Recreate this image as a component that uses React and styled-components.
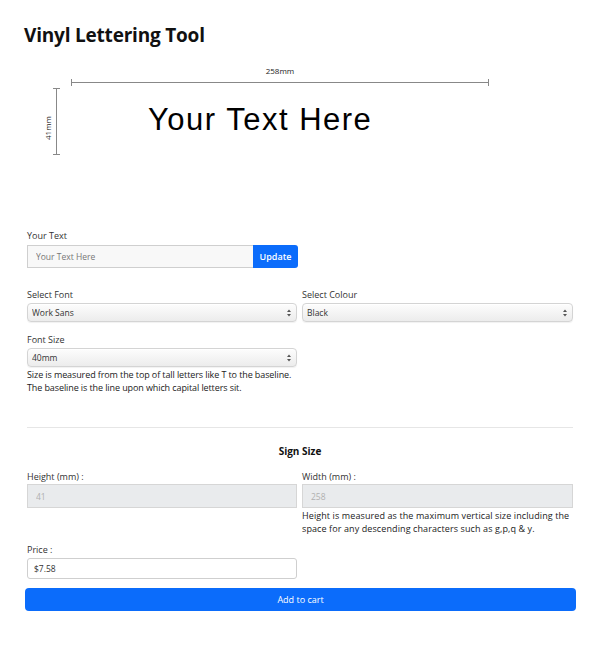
import styled, { createGlobalStyle } from "styled-components";

const GlobalStyle = createGlobalStyle`
  body {
    margin: 0;
    background: #fff;
    font-family: "Open Sans", "Liberation Sans", sans-serif;
    color: #222;
  }
`;

const Page = styled.div`
  width: 600px;
  padding: 0 27px;
  box-sizing: border-box;
`;

const Title = styled.h1`
  margin: 22px 0 0 -3px;
  font-size: 19px;
  font-weight: 700;
  line-height: 26px;
  color: #111;
  letter-spacing: -0.2px;
`;

const Preview = styled.div`
  display: flex;
  height: 164px;
  margin-top: 18px;
  padding-left: 15px;
`;

const VDim = styled.div`
  display: flex;
  align-items: center;
  gap: 3px;
  height: 67px;
  margin-top: 22px;
  width: 29px;
`;

const VLabel = styled.span`
  writing-mode: vertical-rl;
  transform: rotate(180deg);
  font-size: 8px;
  color: #222;
  margin-top: 12px;
`;

const VLine = styled.div`
  position: relative;
  width: 1px;
  height: 100%;
  background: #888;
  &::before,
  &::after {
    content: "";
    position: absolute;
    left: -3px;
    width: 7px;
    height: 1px;
    background: #888;
  }
  &::before { top: 0; }
  &::after { bottom: 0; }
`;

const Canvas = styled.div`
  width: 418px;
  display: flex;
  flex-direction: column;
`;

const HLabel = styled.div`
  text-align: center;
  font-size: 8px;
  line-height: 10px;
  color: #222;
  margin-bottom: 6px;
`;

const HLine = styled.div`
  position: relative;
  height: 1px;
  background: #888;
  &::before,
  &::after {
    content: "";
    position: absolute;
    top: -3px;
    width: 1px;
    height: 7px;
    background: #888;
  }
  &::before { left: 0; }
  &::after { right: 0; }
`;

const SampleText = styled.div`
  margin: 20px 0 0 77px;
  font-family: "Liberation Sans", sans-serif;
  font-size: 31px;
  line-height: 34px;
  color: #000;
  letter-spacing: 1.5px;
`;

const Field = styled.div`
  display: flex;
  flex-direction: column;
`;

const Label = styled.label`
  font-size: 9px;
  line-height: 11px;
  color: #333;
  margin-bottom: ${(p) => p.$gap ?? 4}px;
`;

const InputGroup = styled.div`
  display: flex;
  width: 271px;
`;

const TextInput = styled.input`
  flex: 1;
  height: 23px;
  box-sizing: border-box;
  border: 1px solid #cfcfcf;
  border-right: none;
  background: #f8f8f8;
  padding: 0 8px;
  font: inherit;
  font-size: 8.5px;
  color: #555;
  outline: none;
  &::placeholder { color: #777; }
`;

const BlueButton = styled.button`
  border: none;
  background: #0b6cfb;
  color: #fff;
  font: inherit;
  font-size: 9px;
  font-weight: 600;
  cursor: pointer;
  border-radius: 0 3px 3px 0;
  height: 23px;
  width: 45px;
  padding: 0;
`;

const CartButton = styled(BlueButton)`
  display: block;
  width: 551px;
  height: 23px;
  border-radius: 4px;
  font-weight: 500;
  margin: 9px 0 0 -2px;
`;

const Grid = styled.div`
  display: grid;
  grid-template-columns: 270px 271px;
  column-gap: 5px;
  margin-top: ${(p) => p.$top ?? 0}px;
`;

const SelectWrap = styled.div`
  position: relative;
  height: 19px;
`;

const Select = styled.select`
  display: block;
  appearance: none;
  width: 100%;
  height: 100%;
  box-sizing: border-box;
  border: 1px solid #d4d4d4;
  border-radius: 4px;
  background: linear-gradient(#fdfdfd, #ececec);
  box-shadow: inset 0 1px 0 #fff, 0 1px 1px rgba(0, 0, 0, 0.06);
  padding: 0 4px;
  font: inherit;
  font-size: 8.5px;
  color: #333;
  outline: none;
`;

const Arrows = styled.svg`
  position: absolute;
  right: 6px;
  top: 6px;
  pointer-events: none;
`;

const Help = styled.p`
  margin: ${(p) => p.$top ?? 0}px 0 0;
  font-size: 9px;
  line-height: 13px;
  color: #222;
  white-space: ${(p) => (p.$nowrap ? "nowrap" : "normal")};
  letter-spacing: ${(p) => (p.$nowrap ? "-0.1px" : "0.1px")};
`;

const Divider = styled.hr`
  border: none;
  border-top: 1px solid #e6e6e6;
  margin: 33px 0 0;
`;

const SectionTitle = styled.h3`
  margin: 17px 0 0;
  text-align: center;
  font-size: 10px;
  line-height: 12px;
  font-weight: 700;
  color: #111;
`;

const FlatInput = styled.input`
  height: ${(p) => (p.disabled ? 24 : 21)}px;
  box-sizing: border-box;
  border: 1px solid ${(p) => (p.disabled ? "#d6d6d6" : "#cfcfcf")};
  border-radius: ${(p) => (p.disabled ? 0 : 3)}px;
  background: ${(p) => (p.disabled ? "#e9ebed" : "#fff")};
  padding: 0 ${(p) => (p.disabled ? 8 : 6)}px;
  font: inherit;
  font-size: 8.5px;
  color: ${(p) => (p.disabled ? "#b0b0b0" : "#333")};
  outline: none;
`;

function SelectBox({ value }) {
  return (
    <SelectWrap>
      <Select defaultValue={value}>
        <option>{value}</option>
      </Select>
      <Arrows width="4" height="8" viewBox="0 0 4 8">
        <path d="M0 3 L2 0.5 L4 3 Z M0 5 L2 7.5 L4 5 Z" fill="#555" />
      </Arrows>
    </SelectWrap>
  );
}

export default function App() {
  return (
    <>
      <GlobalStyle />
      <Page>
        <Title>Vinyl Lettering Tool</Title>

        <Preview>
          <VDim>
            <VLabel>41mm</VLabel>
            <VLine />
          </VDim>
          <Canvas>
            <HLabel>258mm</HLabel>
            <HLine />
            <SampleText>Your Text Here</SampleText>
          </Canvas>
        </Preview>

        <Field>
          <Label $gap={4}>Your Text</Label>
          <InputGroup>
            <TextInput placeholder="Your Text Here" />
            <BlueButton>Update</BlueButton>
          </InputGroup>
        </Field>

        <Grid $top={21}>
          <Field>
            <Label $gap={3}>Select Font</Label>
            <SelectBox value="Work Sans" />
          </Field>
          <Field>
            <Label $gap={3}>Select Colour</Label>
            <SelectBox value="Black" />
          </Field>
        </Grid>

        <Grid $top={12}>
          <Field>
            <Label $gap={3}>Font Size</Label>
            <SelectBox value="40mm" />
            <Help $nowrap $top={1}>
              Size is measured from the top of tall letters like T to the baseline.
              <br />
              The baseline is the line upon which capital letters sit.
            </Help>
          </Field>
        </Grid>

        <Divider />
        <SectionTitle>Sign Size</SectionTitle>

        <Grid $top={14}>
          <Field>
            <Label $gap={2}>Height (mm) :</Label>
            <FlatInput disabled value="41" readOnly />
          </Field>
          <Field>
            <Label $gap={2}>Width (mm) :</Label>
            <FlatInput disabled value="258" readOnly />
            <Help $top={1}>
              Height is measured as the maximum vertical size including the space
              for any descending characters such as g,p,q &amp; y.
            </Help>
          </Field>
        </Grid>

        <Grid $top={9}>
          <Field>
            <Label $gap={3}>Price :</Label>
            <FlatInput defaultValue="$7.58" />
          </Field>
        </Grid>

        <CartButton>Add to cart</CartButton>
      </Page>
    </>
  );
}
